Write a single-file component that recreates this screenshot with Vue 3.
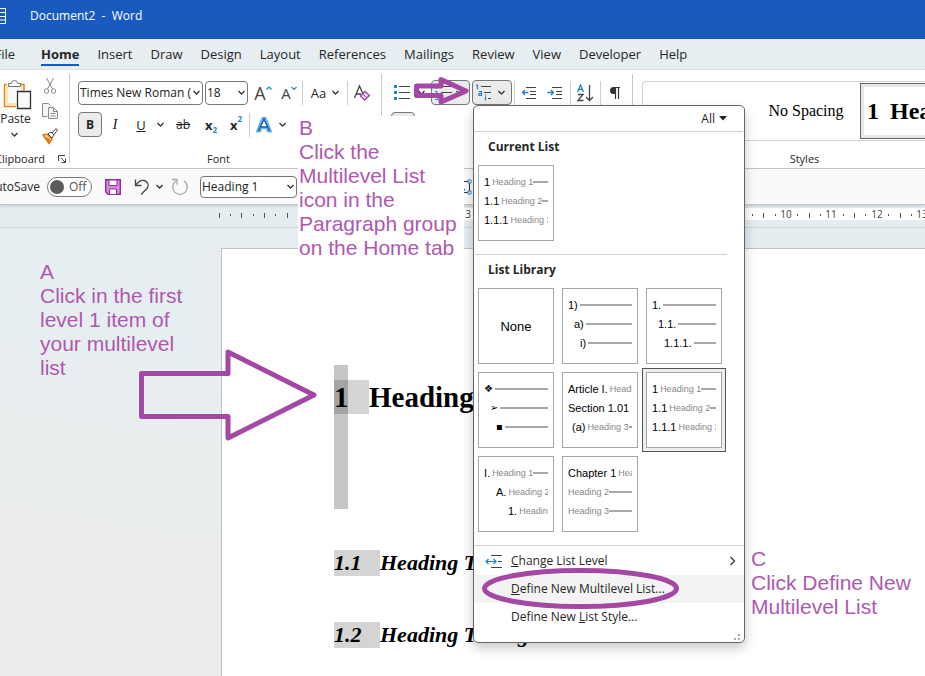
<script setup>
import { ref } from 'vue'

const fontName = ref('Times New Roman (')
const fontSize = ref('18')
const styleName = ref('Heading 1')
const autoSave = ref(false)

const tabs = ['File', 'Home', 'Insert', 'Draw', 'Design', 'Layout', 'References', 'Mailings', 'Review', 'View', 'Developer', 'Help']

const headingList = [
  { n: '1', h: 'Heading 1' },
  { n: '1.1', h: 'Heading 2' },
  { n: '1.1.1', h: 'Heading 3' },
]

const library = [
  { none: true, rows: [] },
  { rows: [{ n: '1)' }, { n: 'a)', indent: 6 }, { n: 'i)', indent: 12 }] },
  { rows: [{ n: '1.' }, { n: '1.1.', indent: 6 }, { n: '1.1.1.', indent: 12 }] },
  { symbols: true, rows: [{ n: '❖' }, { n: '➢', indent: 6 }, { n: '▪', indent: 12 }] },
  { rows: [{ n: 'Article I.', h: 'Heading 1' }, { n: 'Section 1.01', h: 'Heading 2' }, { n: '(a)', h: 'Heading 3', indent: 4 }] },
  { selected: true, rows: headingList },
  { rows: [{ n: 'I.', h: 'Heading 1' }, { n: 'A.', h: 'Heading 2', indent: 12 }, { n: '1.', h: 'Heading 3', indent: 24 }] },
  { rows: [{ n: 'Chapter 1', h: 'Heading 2' }, { h: 'Heading 2' }, { h: 'Heading 3' }] },
]

// Ruler: zero sits at the left text margin, four ticks to the unit.
const zero = 332
const unit = 45.4
const ticks = []
for (let q = -10; q <= 160; q++) {
  const x = Math.round(zero + (q * unit) / 4)
  const whole = q % 4 === 0
  if (whole && q > 0) ticks.push({ x, label: q / 4 })
  else ticks.push({ x, tall: q % 2 === 0 })
}
</script>

<template>
  <div class="app">
    <header class="titlebar">
      <svg class="doc-icon" width="6" height="16" viewBox="0 0 6 16"><path d="M0 .5h5.500v15H0M0 4.500h5M0 8.500h5M0 12h5" /></svg>
      <span>Document2&nbsp; -&nbsp; Word</span>
    </header>

    <nav class="tabs">
      <a v-for="t in tabs" :key="t" href="#" :class="{ active: t === 'Home', first: t === 'File' }">{{ t }}</a>
    </nav>

    <section class="ribbon">
      <div class="group clipboard">
        <div class="clip-tools">
          <button class="paste" aria-label="Paste">
            <svg width="32" height="32" viewBox="0 0 32 32">
              <path d="M7 5.500H4.500v22H16" fill="none" stroke="#e08416" stroke-width="1.500" />
              <path d="M5.500 6.500h3v20h-3z" fill="#fbe3b4" />
              <path d="M5 24h12v2.500H5zM20 6h3v6h-3z" fill="#fbe3b4" />
              <path d="M20 5.500h4v6" fill="none" stroke="#e08416" stroke-width="1.500" />
              <path d="M8 7h13v5h-4v12H8z" fill="#f9fafa" />
              <path d="M8.500 7.500v-3h3a3 3 0 0 1 6 0h3v3z" fill="#fff" stroke="#777" />
              <path d="M17.500 12.500h13v17h-13z" fill="#fafafa" stroke="#333" stroke-width="1.300" />
            </svg>
            <span>Paste</span>
            <svg class="chev" width="7" height="5" viewBox="0 0 7 5"><path d="M.5 1l3 3 3-3" /></svg>
          </button>
          <div class="clip-side">
            <button aria-label="Cut">
              <svg width="16" height="18" viewBox="0 0 16 18" fill="none" stroke="#8a8a8a"><path d="M4.500 1l6 11M11.500 1l-6 11" /><circle cx="4.500" cy="14" r="2.200" /><circle cx="11.500" cy="14" r="2.200" /></svg>
            </button>
            <button aria-label="Copy">
              <svg width="18" height="18" viewBox="0 0 18 18" fill="#f5f5f5" stroke="#8a8a8a"><path d="M6.500 14.500h-5v-13h6l2 2" /><path d="M7.500 5.500h5l4 4v7h-9zM12.500 5.500v4h4M9.500 11.500h5M9.500 14h5" /></svg>
            </button>
            <button aria-label="Format Painter">
              <svg width="18" height="18" viewBox="0 0 18 18"><path d="M2 8l4-1 5 5-3 4.500z" fill="#fbd9a5" stroke="#e0780c" stroke-width="1.500" /><path d="M2 9l7 3-1 4z" fill="#e0780c" /><path d="M7 7l3-2 3 3-2 3zM11 6l4-4.500 1.500 1.500L13 7.500" fill="#fff" stroke="#444" /></svg>
            </button>
          </div>
        </div>
        <div class="label end">
          <span>Clipboard</span>
          <svg width="10" height="10" viewBox="0 0 10 10" fill="none" stroke="#444"><path d="M1.500 7V1.500H8M4 4l4.500 4.500M8.500 4.500v4h-4" /></svg>
        </div>
      </div>

      <div class="group font">
        <div class="row">
          <label class="combo w125"><select v-model="fontName" aria-label="Font"><option>Times New Roman (</option></select><svg class="chev" width="7" height="5" viewBox="0 0 7 5"><path d="M.5 1l3 3 3-3" /></svg></label>
          <label class="combo w43"><select v-model="fontSize" aria-label="Font size"><option>18</option></select><svg class="chev" width="7" height="5" viewBox="0 0 7 5"><path d="M.5 1l3 3 3-3" /></svg></label>
          <button class="w26 grow-a" aria-label="Increase font size"><span>A</span><svg width="6" height="14" viewBox="0 0 6 14"><path d="M.5 3.500L3 1l2.500 2.500" /></svg></button>
          <button class="w26 grow-a small" aria-label="Decrease font size"><span>A</span><svg width="6" height="14" viewBox="0 0 6 14"><path d="M.5 1L3 3.500 5.500 1" /></svg></button>
          <i class="sep"></i>
          <button class="w44 aa"><span>Aa</span><svg class="chev" width="7" height="5" viewBox="0 0 7 5"><path d="M.5 1l3 3 3-3" /></svg></button>
          <i class="sep"></i>
          <button class="w28" aria-label="Clear formatting">
            <svg width="18" height="18" viewBox="0 0 18 18" fill="none"><path d="M1.500 14L6.500 2l3.500 8M3 10h5" stroke="#444" stroke-width="1.300" /><path d="M12 7.500l4.500 4-5 4.500-4-4z" fill="#f0dcf2" stroke="#9c3fa8" stroke-width="1.300" /><path d="M9.500 9.800l4.500 4" stroke="#9c3fa8" /></svg>
          </button>
        </div>
        <div class="row second">
          <button class="pressed w24"><b>B</b></button>
          <button class="w26 italic">I</button>
          <button class="w26 under">U</button>
          <button class="w12" aria-label="Underline options"><svg class="chev" width="7" height="5" viewBox="0 0 7 5"><path d="M.5 1l3 3 3-3" /></svg></button>
          <button class="w32 strike">ab</button>
          <button class="w24 script"><b>x</b><sub>2</sub></button>
          <button class="w26 script"><b>x</b><sup>2</sup></button>
          <i class="sep"></i>
          <button class="w28" aria-label="Text effects"><svg width="16" height="16" viewBox="0 0 16 16"><path d="M1 14.500L6.500 1h3L15 14.500h-3L10.500 11h-5L4 14.500z" fill="#fff" stroke="#69b3ea" stroke-width="2" /><path d="M2.500 14L8 2l5.500 12M5 10h6" fill="none" stroke="#1662ad" stroke-width="1.600" /></svg></button>
          <button class="w8" aria-label="Text effects options"><svg class="chev" width="7" height="5" viewBox="0 0 7 5"><path d="M.5 1l3 3 3-3" /></svg></button>
        </div>
        <div class="label">Font</div>
      </div>

      <div class="group para">
        <div class="row">
          <button class="w40 spread" aria-label="Bullets">
            <svg width="16" height="16" viewBox="0 0 16 16"><path d="M0 0h3v3H0zM0 6h3v3H0zM0 12h3v3H0z" fill="#1f83cc" /><path d="M5 1.500h11M5 7.500h11M5 13.500h11" stroke="#444" /></svg>
            <svg class="chev" width="7" height="5" viewBox="0 0 7 5"><path d="M.5 1l3 3 3-3" /></svg>
          </button>
          <button class="pressed w39 spread" aria-label="Numbering">
            <svg width="17" height="17" viewBox="0 0 17 17"><g fill="none" stroke="#1f83cc"><path d="M0 1.500h1.500V5M0 7.500h2v2H0M0 12.500h2.500v3H0" /></g><path d="M6 2.500h11M6 8.500h11M6 14.500h11" stroke="#444" /></svg>
            <svg class="chev" width="7" height="5" viewBox="0 0 7 5"><path d="M.5 1l3 3 3-3" /></svg>
          </button>
          <button class="pressed w40 spread" aria-label="Multilevel list">
            <svg width="17" height="17" viewBox="0 0 17 17"><g fill="none" stroke="#1f83cc" stroke-width="1.200"><path d="M0 1h1.500v4M3 7.500h2.500v4H3v-2h2.500M9.500 12.500v4M9.500 10.500v1" /></g><path d="M5 2.500h10M8 8.500h7M12 14.500h3" stroke="#444" /></svg>
            <svg class="chev" width="7" height="5" viewBox="0 0 7 5"><path d="M.5 1l3 3 3-3" /></svg>
          </button>
          <i class="sep"></i>
          <button class="w26" aria-label="Decrease indent"><svg width="16" height="14" viewBox="0 0 16 14" fill="none"><path d="M5 1.500h10M9 5.500h6M9 8.500h6M5 12.500h10" stroke="#444" /><path d="M7.500 6.500h-6M4 4L1.500 6.500 4 9" stroke="#1f83cc" stroke-width="1.300" /></svg></button>
          <button class="w26" aria-label="Increase indent"><svg width="16" height="14" viewBox="0 0 16 14" fill="none"><path d="M5 1.500h10M9 5.500h6M9 8.500h6M5 12.500h10" stroke="#444" /><path d="M.5 6.500h6M4 4l2.500 2.500L4 9" stroke="#1f83cc" stroke-width="1.300" /></svg></button>
          <i class="sep"></i>
          <button class="w26" aria-label="Sort"><svg width="18" height="18" viewBox="0 0 18 18" fill="none" stroke-width="1.300"><path d="M1.500 8l3-7 3 7M2.500 5.500h4" stroke="#1f83cc" /><path d="M2 10.500h5L2 16.500h5.500M13.500 1v15M10 13l3.500 3.500L17 13" stroke="#444" /></svg></button>
          <i class="sep"></i>
          <button class="w26" aria-label="Show paragraph marks"><svg width="12" height="14" viewBox="0 0 12 14"><path d="M6 1H4.500a3.500 3.500 0 0 0 0 7H6z" fill="#333" /><path d="M5 1.500h6M6.500 1v12M9.500 1v12" stroke="#333" stroke-width="1.200" /></svg></button>
        </div>
        <div class="row second">
          <button class="pressed w24" aria-label="Align left"></button>
        </div>
      </div>

      <div class="group styles">
        <div class="gallery">
          <button class="style-plain">No Spacing</button>
          <button class="style-heading"><span>1</span><span>Heading</span></button>
        </div>
        <div class="label">Styles</div>
      </div>
    </section>

    <section class="qat">
      <div class="auto"><label for="autosave">AutoSave</label></div>
      <div class="toggle"><input id="autosave" v-model="autoSave" type="checkbox" /><span>Off</span></div>
      <button class="w24" aria-label="Save"><svg width="16" height="16" viewBox="0 0 16 16"><path d="M.7.700h14.600v14.600H3L.7 13z" fill="#d48fdc" stroke="#8e2f9b" stroke-width="1.400" /><path d="M4 1h8v5.500H4z" fill="#fff" stroke="#8e2f9b" /><path d="M4.500 15v-5h7v5" fill="#fff" stroke="#8e2f9b" /></svg></button>
      <button class="undo" aria-label="Undo"><svg width="16" height="18" viewBox="0 0 16 18" fill="none" stroke="#444" stroke-width="1.300"><path d="M1.500 1.500v6h6M1.500 7.500C4 4 7 2 10 2.500c4 .7 5.500 5 3 8L7 16.500" /></svg></button>
      <button class="w12" aria-label="Undo options"><svg class="chev" width="7" height="5" viewBox="0 0 7 5"><path d="M.5 1l3 3 3-3" /></svg></button>
      <button class="redo" aria-label="Redo"><svg width="18" height="18" viewBox="0 0 18 18" fill="none" stroke="#a6a6a6" stroke-width="1.300"><path d="M5 3a7.300 7.300 0 1 0 8 0M1 1.500h5v5" /></svg></button>
      <label class="combo w97"><select v-model="styleName" aria-label="Style"><option>Heading 1</option></select><svg class="chev" width="7" height="5" viewBox="0 0 7 5"><path d="M.5 1l3 3 3-3" /></svg></label>
      <button class="textbox" aria-label="Text box"><svg width="18" height="16" viewBox="0 0 18 16" fill="none"><path d="M2 2.500h13.500v11H2z" stroke="#333" /><path d="M5 12l3-7 3 7M6 9.500h4" stroke="#1f83cc" /><path d="M14 1h3v3h-3zM14 12h3v3h-3z" fill="#fff" stroke="#1f83cc" /></svg></button>
    </section>

    <div class="ruler">
      <svg width="100%" height="22">
        <rect x="334" y="3" width="100%" height="12" fill="#fff" />
        <template v-for="t in ticks" :key="t.x">
          <text v-if="t.label" :x="t.x" y="13" text-anchor="middle">{{ t.label }}</text>
          <rect v-else :x="t.x" :y="t.tall ? 8 : 9" width="1" :height="t.tall ? 5 : 2" fill="#555" />
        </template>
      </svg>
    </div>

    <main class="canvas">
      <article class="page">
        <div class="h1-block"><h1><span class="num">1</span>Heading</h1></div>
        <h2><span class="num">1.1</span>Heading Testing</h2>
        <h2><span class="num">1.2</span>Heading Testing</h2>
      </article>
    </main>

    <div class="note note-a">A<br />Click in the first level 1 item of your multilevel list</div>
    <div class="note note-b">B<br />Click the Multilevel List icon in the Paragraph group on the Home tab</div>
    <div class="note note-c">C<br />Click Define New Multilevel List</div>

    <div class="menu">
      <div class="all"><button>All <svg width="8" height="5" viewBox="0 0 8 5"><path d="M0 0h8L4 4.500z" fill="#222" /></svg></button></div>
      <h3>Current List</h3>
      <div class="tiles">
        <button class="tile">
          <span v-for="r in headingList" :key="r.n" class="line"><span>{{ r.n }}</span><small>{{ r.h }}</small><i></i></span>
        </button>
      </div>
      <hr />
      <h3>List Library</h3>
      <div class="tiles">
        <button v-for="(t, i) in library" :key="i" class="tile" :class="{ selected: t.selected, none: t.none, symbols: t.symbols }">
          <template v-if="t.none">None</template>
          <span v-for="(r, j) in t.rows" :key="j" class="line" :style="{ paddingLeft: (r.indent || 0) + 'px' }">
            <span v-if="r.n">{{ r.n }}</span><small v-if="r.h">{{ r.h }}</small><i :class="{ gap: !r.h }"></i>
          </span>
        </button>
      </div>
      <div class="commands">
        <button>
          <svg width="18" height="14" viewBox="0 0 18 14" fill="none"><path d="M6 1.500h11M13 7.500h4M6 13.500h11" stroke="#444" /><path d="M1 7.500h10M3.500 5L1 7.500 3.500 10M8.500 5L11 7.500 8.500 10" stroke="#1f83cc" stroke-width="1.200" /></svg>
          <span><u>C</u>hange List Level</span>
          <svg class="more" width="7" height="10" viewBox="0 0 7 10"><path d="M1.500 1l4 4-4 4" fill="none" stroke="#333" stroke-width="1.200" /></svg>
        </button>
        <button class="hover"><span class="col2"><u>D</u>efine New Multilevel List...</span></button>
        <button><span class="col2">Define New <u>L</u>ist Style...</span></button>
      </div>
      <div class="grip"><svg width="8" height="8" viewBox="0 0 8 8"><path d="M5 0h2v2H5zM1 4h2v2H1zM5 4h2v2H5z" fill="#aaa" /></svg></div>
    </div>

    <svg class="marks" width="925" height="676" viewBox="0 0 925 676" fill="none" stroke="#a349a4" stroke-width="5" stroke-linejoin="round">
      <path d="M141.500 373.500H228V352l86 43-86 43v-21.500h-86.500z" />
      <path d="M416.500 86H441v-6.500l25 11.500-25 11v-6.500h-24.500z" />
      <ellipse cx="580.500" cy="588.500" rx="96" ry="18" />
    </svg>
  </div>
</template>

<style>
body {
  margin: 0;
}
</style>

<style scoped>
.app {
  position: relative;
  display: flex;
  flex-direction: column;
  min-height: 100vh;
  overflow: hidden;
  font: 12px/16px "Open Sans", "Noto Sans", sans-serif;
  color: #262626;
}
button {
  display: flex;
  align-items: center;
  justify-content: center;
  box-sizing: border-box;
  padding: 0;
  border: 0;
  background: none;
  color: inherit;
  font: inherit;
  flex: none;
}
svg { flex: none; }
.chev path { fill: none; stroke: #333; stroke-width: 1.3; }

.titlebar {
  display: flex;
  align-items: center;
  gap: 24px;
  height: 31px;
  padding-bottom: 8px;
  background: #185abd;
  color: #fff;
}
.doc-icon path { fill: none; stroke: #fff; }

.tabs {
  display: flex;
  gap: 18px;
  height: 30px;
  background: #e6eef1;
  border-bottom: 1px solid #dde3e6;
  font-size: 13px;
}
.tabs a {
  flex: none;
  height: 25px;
  line-height: 31px;
  color: inherit;
  text-decoration: none;
}
.tabs .first { width: 21px; margin: 0 8px 0 -6px; text-align: right; }
.tabs .active { font-weight: 700; border-bottom: 2px solid #185abd; }

.ribbon {
  display: flex;
  height: 98px;
  background: #fff;
  border-bottom: 1px solid #c8c8c8;
}
.group {
  box-sizing: border-box;
  display: flex;
  flex-direction: column;
  flex: none;
  margin: 4px 0 5px;
  padding-top: 6px;
  border-right: 1px solid #c8c8c8;
}
.clipboard { width: 70px; }
.font { width: 312px; padding-left: 8px; }
.para { width: 251px; padding-left: 9px; }
.styles { flex: 1; min-width: 0; padding-left: 9px; border: 0; }
.label { margin: auto 0 -4px; height: 16px; text-align: center; font-size: 11px; }
.label.end { display: flex; align-items: center; justify-content: flex-end; gap: 12px; padding-right: 2px; }
.font .label { padding-right: 22px; }

.clip-tools { display: flex; height: 66px; margin-top: -3px; }
.paste { flex-direction: column; width: 31px; height: 62px; font-size: 12px; }
.paste .chev { margin: 5px 2px 0 0; }
.clip-side { display: flex; flex-direction: column; gap: 7px; margin-left: 10px; }

.row { display: flex; align-items: center; height: 25px; }
.row.second { margin-top: 7px; }
.sep { flex: none; width: 1px; height: 24px; background: #d0d0d0; }
.w8 { width: 8px; }
.w12 { width: 12px; }
.w24 { width: 24px; }
.w26 { width: 26px; }
.w28 { width: 28px; }
.w32 { width: 32px; }
.w39 { width: 39px; margin-right: 2px; }
.w40 { width: 40px; }
.w43 { width: 43px; }
.w44 { width: 44px; }
.w97 { width: 97px; }
.w125 { width: 125px; }
.row .w43 { margin: 0 2px; }
.para .sep { margin: 0 1px 0 2px; }
.pressed { height: 25px; border: 1px solid #777; border-radius: 4px; background: #ebebeb; }
.spread { justify-content: space-between; padding: 0 6px 0 3px; }

.combo {
  display: grid;
  align-items: center;
  box-sizing: border-box;
  height: 24px;
  border: 1px solid #777;
  border-radius: 4px;
  background: #fff;
  flex: none;
}
.combo select {
  grid-area: 1 / 1;
  width: 100%;
  height: 22px;
  padding: 0 0 0 1px;
  border: 0;
  background: none;
  appearance: none;
  color: #222;
  font: inherit;
}
.combo .chev { grid-area: 1 / 1; justify-self: end; margin-right: 2px; }

.grow-a { font-size: 18px; color: #444; }
.grow-a.small { font-size: 15px; }
.grow-a path { fill: none; stroke: #1f83cc; stroke-width: 1.2; }
.aa { gap: 6px; font-size: 13px; }
.italic { font: italic 15px "Liberation Serif", serif; }
.under { font-size: 13px; text-decoration: underline; }
.second .w12 { margin-right: 1px; }
.strike { text-decoration: line-through; }
.script { font-size: 13px; }
.script sub, .script sup { color: #1f83cc; font-size: 8px; font-weight: 700; }
.script sub { margin-top: 10px; }
.script sup { margin-bottom: 12px; }

.gallery {
  display: flex;
  align-items: flex-start;
  height: 58px;
  margin-top: 1px;
  border: 1px solid #d0d0d0;
  border-width: 1px 0 1px 1px;
  border-radius: 4px 0 0 4px;
  overflow: hidden;
}
.style-plain { width: 90px; height: 58px; margin: 0 9px 0 118px; font: 16px "Liberation Serif", serif; color: #000; }
.style-heading {
  justify-content: flex-start;
  gap: 11px;
  width: 120px;
  height: 56px;
  margin-top: 1px;
  padding-left: 6px;
  border: 1px solid #666;
  box-shadow: inset 0 0 0 3px #e8e8e8;
  font: 700 24px "Liberation Serif", serif;
  color: #000;
}
.styles .label { padding-left: 42px; }

.qat {
  position: relative;
  display: flex;
  align-items: center;
  height: 35px;
  background: #fafafa;
  border-bottom: 1px solid #c2c8ca;
  box-shadow: 0 1px 3px rgba(0, 0, 0, 0.15);
}
.auto { display: flex; justify-content: flex-end; width: 40px; overflow: hidden; }
.toggle {
  display: flex;
  align-items: center;
  gap: 5px;
  box-sizing: border-box;
  width: 45px;
  height: 20px;
  margin: 0 9px 0 7px;
  padding-left: 2px;
  border: 1px solid #777;
  border-radius: 10px;
  background: #fff;
  color: #555;
}
.toggle input { appearance: none; width: 14px; height: 14px; margin: 0; border-radius: 50%; background: #5c5c5c; }
.undo { width: 22px; margin-left: 6px; }
.redo { width: 22px; margin: 0 9px 0 4px; }
.qat .combo { height: 22px; }
.qat .combo select { height: 20px; }
.textbox { margin-left: 157px; }

.ruler { height: 22px; background: #e5edf0; border-bottom: 1px solid #cdd3d5; }
.ruler svg { display: block; }
.ruler text { font-size: 10px; fill: #444; }

.canvas {
  display: flex;
  flex: 1;
  padding: 20px 0 0 221px;
  background: linear-gradient(190deg, #e4edf0, #e7eef1 40%, #eaedec 70%);
}
.page {
  flex: 1;
  padding: 116px 0 0 112px;
  background: #fff;
  border: 1px solid #c0c0c0;
  border-width: 1px 0 0 1px;
  font-family: "Liberation Serif", serif;
  color: #000;
}
h1, h2 { display: flex; margin: 0; white-space: nowrap; }
.h1-block { height: 129px; padding-top: 15px; background: linear-gradient(#c6c6c6, #c6c6c6) 0 0 / 14px 100% no-repeat; }
h1 { font-size: 29px; line-height: 34px; }
h2 { margin: 41px 0 46px; font-size: 22px; line-height: 26px; font-style: italic; }
h2 + h2 { margin-top: 0; }
.num { width: 35px; background: rgba(0, 0, 0, 0.17); }
h2 .num { width: 46px; }

.note { position: absolute; font: 21px/24px "Liberation Sans", sans-serif; color: #ae59af; }
.note-a { left: 40px; top: 260px; width: 160px; }
.note-b { left: 298px; top: 116px; width: 165px; padding: 0 0 3px 1px; background: #fff; }
.note-c { left: 751px; top: 547px; width: 170px; }

.menu {
  position: absolute;
  left: 473px;
  top: 105px;
  box-sizing: border-box;
  width: 272px;
  border: 1px solid #666;
  border-radius: 5px;
  background: #fff;
  box-shadow: 0 5px 12px rgba(0, 0, 0, 0.22);
}
.all { display: flex; justify-content: flex-end; height: 25px; margin: 0 1px; padding-right: 16px; border-bottom: 1px solid #d0d0d0; }
.all button { gap: 4px; }
.menu h3 { margin: 0; padding: 7px 14px 0; font-size: 12px; line-height: 16px; font-weight: 700; }
.menu hr { width: 252px; height: 1px; margin: 13px 0 0 1px; border: 0; background: #d0d0d0; }
.tiles { display: grid; grid-template-columns: repeat(3, 76px); gap: 8px; padding: 10px 0 0 4px; }
.tile {
  flex-direction: column;
  align-items: stretch;
  justify-content: flex-start;
  height: 76px;
  padding: 6px 5px;
  border: 1px solid #a8a8a8;
  background: #fff;
  color: #000;
  font: 11px "Liberation Sans", sans-serif;
  text-align: left;
}
.tile.none { align-items: center; justify-content: center; font-size: 13px; }
.tile.selected { box-shadow: 0 0 0 3px #ededed, 0 0 0 4px #555; }
.tile.symbols { font: 10px "DejaVu Sans", sans-serif; }
.line { display: flex; align-items: center; height: 19px; overflow: hidden; white-space: nowrap; }
.line span + small { margin-left: 2px; }
.line small { font-size: 9px; color: #888; }
.line i { flex: 1; height: 2px; background: #a8a8a8; }
.line i.gap { margin-left: 2px; }
.commands { margin-top: 13px; padding-top: 1px; border-top: 1px solid #d0d0d0; }
.commands button { justify-content: flex-start; gap: 8px; width: 100%; height: 28px; padding: 0 8px 0 11px; }
.commands .hover { background: #f3f3f3; }
.commands .more { margin-left: auto; }
.col2 { padding-left: 26px; }
.grip { display: flex; justify-content: flex-end; align-items: flex-end; height: 11px; padding-right: 3px; }
.marks { position: absolute; left: 0; top: 0; pointer-events: none; }
</style>
